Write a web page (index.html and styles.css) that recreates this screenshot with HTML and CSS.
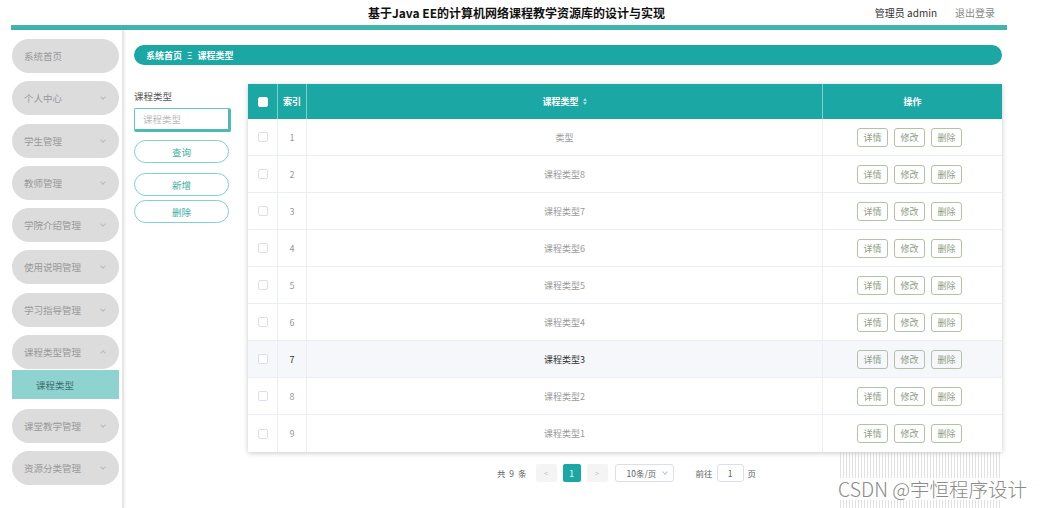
FILE: index.html
```html
<!DOCTYPE html>
<html lang="zh">
<head>
<meta charset="utf-8">
<title>课程类型</title>
<link rel="stylesheet" href="styles.css">
</head>
<body>
<header class="top">
  <div class="title">基于Java EE的计算机网络课程教学资源库的设计与实现</div>
  <div class="user">
    <span class="admin">管理员 admin</span>
    <span class="logout">退出登录</span>
  </div>
</header>
<div class="topline"></div>
<div class="main">
  <aside class="side">
    <div class="menu">系统首页</div>
    <div class="menu">个人中心<span class="chev"></span></div>
    <div class="menu">学生管理<span class="chev"></span></div>
    <div class="menu">教师管理<span class="chev"></span></div>
    <div class="menu">学院介绍管理<span class="chev"></span></div>
    <div class="menu">使用说明管理<span class="chev"></span></div>
    <div class="menu">学习指导管理<span class="chev"></span></div>
    <div class="menu open">课程类型管理<span class="chev up"></span></div>
    <div class="submenu">课程类型</div>
    <div class="menu after">课堂教学管理<span class="chev"></span></div>
    <div class="menu">资源分类管理<span class="chev"></span></div>
  </aside>
  <section class="content">
    <div class="crumb"><span>系统首页</span><span class="sep">Ξ</span><span>课程类型</span></div>
    <div class="body">
      <div class="search">
        <div class="label">课程类型</div>
        <div class="input">课程类型</div>
        <div class="btn first">查询</div>
        <div class="btn second">新增</div>
        <div class="btn">删除</div>
      </div>
      <div class="tablewrap">
        <div class="table">
          <div class="row head">
            <div class="c ck"><span class="box white"></span></div>
            <div class="c idx">索引</div>
            <div class="c name">课程类型<span class="sort"><i class="tu"></i><i class="td"></i></span></div>
            <div class="c op">操作</div>
          </div>
          <div class="row"><div class="c ck"><span class="box"></span></div><div class="c idx">1</div><div class="c name">类型</div><div class="c op"><span class="ob">详情</span><span class="ob">修改</span><span class="ob">删除</span></div></div>
          <div class="row"><div class="c ck"><span class="box"></span></div><div class="c idx">2</div><div class="c name">课程类型8</div><div class="c op"><span class="ob">详情</span><span class="ob">修改</span><span class="ob">删除</span></div></div>
          <div class="row"><div class="c ck"><span class="box"></span></div><div class="c idx">3</div><div class="c name">课程类型7</div><div class="c op"><span class="ob">详情</span><span class="ob">修改</span><span class="ob">删除</span></div></div>
          <div class="row"><div class="c ck"><span class="box"></span></div><div class="c idx">4</div><div class="c name">课程类型6</div><div class="c op"><span class="ob">详情</span><span class="ob">修改</span><span class="ob">删除</span></div></div>
          <div class="row"><div class="c ck"><span class="box"></span></div><div class="c idx">5</div><div class="c name">课程类型5</div><div class="c op"><span class="ob">详情</span><span class="ob">修改</span><span class="ob">删除</span></div></div>
          <div class="row"><div class="c ck"><span class="box"></span></div><div class="c idx">6</div><div class="c name">课程类型4</div><div class="c op"><span class="ob">详情</span><span class="ob">修改</span><span class="ob">删除</span></div></div>
          <div class="row hover"><div class="c ck"><span class="box"></span></div><div class="c idx">7</div><div class="c name">课程类型3</div><div class="c op"><span class="ob">详情</span><span class="ob">修改</span><span class="ob">删除</span></div></div>
          <div class="row"><div class="c ck"><span class="box"></span></div><div class="c idx">8</div><div class="c name">课程类型2</div><div class="c op"><span class="ob">详情</span><span class="ob">修改</span><span class="ob">删除</span></div></div>
          <div class="row"><div class="c ck"><span class="box"></span></div><div class="c idx">9</div><div class="c name">课程类型1</div><div class="c op"><span class="ob">详情</span><span class="ob">修改</span><span class="ob">删除</span></div></div>
        </div>
        <div class="pager">
          <span class="total">共 9 条</span>
          <span class="pbtn">&lt;</span>
          <span class="pnum">1</span>
          <span class="pbtn">&gt;</span>
          <span class="psel">10条/页<span class="chev small"></span></span>
          <span class="goto">前往</span>
          <span class="pinput">1</span>
          <span class="page">页</span>
        </div>
      </div>
    </div>
  </section>
</div>
<div class="wm"><div class="stripes"></div><div class="wmtext">CSDN @宇恒程序设计</div></div>
</body>
</html>
```
FILE: styles.css
```css
* { box-sizing: border-box; }
html, body { margin: 0; padding: 0; }
body {
  width: 1045px;
  height: 508px;
  overflow: hidden;
  background: #fff;
  font-family: "Noto Sans CJK SC", "Noto Sans", sans-serif;
  color: #606266;
  position: relative;
}
.top {
  height: 25px;
  position: relative;
  display: flex;
  justify-content: center;
  align-items: center;
}
.title {
  font-size: 12px;
  font-weight: bold;
  color: #111;
  margin-left: -12px;
}
.user {
  position: absolute;
  right: 50px;
  top: 0;
  height: 25px;
  display: flex;
  align-items: center;
  font-size: 10px;
}
.admin { color: #333; margin-right: 18px; }
.logout { color: #888; }
.topline {
  margin-left: 11px;
  width: 996px;
  height: 5px;
  background: #3fb5ad;
}
.main {
  display: flex;
  height: 478px;
}
.side {
  width: 124px;
  padding: 9px 0 0 12px;
  border-right: 2px solid #e6e6e6;
  box-shadow: 1px 0 3px rgba(0,0,0,0.06);
  display: flex;
  flex-direction: column;
}
.menu {
  width: 107px;
  height: 34px;
  margin-bottom: 8.3px;
  border-radius: 17px;
  background: #dcdcdc;
  color: #999;
  font-size: 9.5px;
  display: flex;
  align-items: center;
  padding-left: 12px;
  position: relative;
}
.menu.open { margin-bottom: 1px; }
.chev {
  position: absolute;
  right: 14px;
  top: 14px;
  width: 4px;
  height: 4px;
  border-right: 1px solid #bbb;
  border-bottom: 1px solid #bbb;
  transform: rotate(45deg);
}
.chev.up { top: 16px; transform: rotate(225deg); }
.submenu {
  width: 107px;
  height: 29px;
  background: #8ed3d0;
  color: #3c6f6e;
  font-size: 9.5px;
  display: flex;
  align-items: center;
  padding-left: 24px;
  margin-bottom: 10px;
}
.content {
  flex: 1;
  padding-left: 10px;
  padding-top: 15px;
}
.crumb {
  width: 868px;
  height: 20px;
  border-radius: 10px;
  background: #1ba8a5;
  color: #fff;
  font-size: 9px;
  font-weight: bold;
  display: flex;
  align-items: center;
  padding-left: 12px;
}
.crumb .sep { margin: 0 5px; font-weight: normal; }
.body {
  display: flex;
  margin-top: 19px;
}
.search {
  width: 97px;
  padding-top: 6px;
  display: flex;
  flex-direction: column;
}
.label {
  font-size: 9.5px;
  color: #555;
  height: 12px;
  line-height: 12px;
  margin-bottom: 6px;
}
.input {
  width: 97px;
  height: 24px;
  border: 1px solid #63c6bf;
  border-right: 3px solid #4fbab3;
  border-bottom: 3px solid #4fbab3;
  border-radius: 2px;
  font-size: 9.5px;
  color: #bbb;
  padding-left: 8px;
  display: flex;
  align-items: center;
}
.btn {
  width: 95px;
  height: 23px;
  border: 1px solid #80d2cb;
  border-radius: 12px;
  font-size: 9.5px;
  color: #3bb0a8;
  display: flex;
  align-items: center;
  justify-content: center;
  margin-bottom: 4px;
}
.btn.first { margin-top: 8px; margin-bottom: 10px; }
.tablewrap {
  margin-left: 17px;
  width: 754px;
}
.table {
  width: 754px;
  box-shadow: 0 1px 5px rgba(0,0,0,0.22);
  background: #fff;
}
.row {
  display: flex;
  height: 37px;
  border-bottom: 1px solid #ebeef5;
  font-size: 9px;
  color: #999;
}
.row:last-child { border-bottom: none; }
.row.head {
  height: 35px;
  background: #1ba8a5;
  color: #fff;
  font-weight: bold;
  border-bottom: none;
}
.row.hover { background: #f5f7fa; color: #333; }
.c {
  display: flex;
  align-items: center;
  justify-content: center;
  border-right: 1px solid #ebeef5;
}
.head .c { border-right: 1px solid rgba(255,255,255,0.45); }
.c:last-child, .head .c:last-child { border-right: none; }
.ck { width: 30px; }
.idx { width: 29px; }
.name { width: 516px; }
.op { flex: 1; gap: 6px; }
.row:not(.head) .op { padding-right: 6px; }
.box {
  width: 10px;
  height: 10px;
  border: 1px solid #dcdfe6;
  border-radius: 2px;
  background: #fff;
}
.box.white { border-color: #fff; }
.sort {
  display: inline-flex;
  flex-direction: column;
  margin-left: 4px;
  gap: 1px;
}
.sort i {
  width: 0;
  height: 0;
  border-left: 2.5px solid transparent;
  border-right: 2.5px solid transparent;
}
.sort .tu { border-bottom: 3px solid rgba(255,255,255,0.6); }
.sort .td { border-top: 3px solid rgba(255,255,255,0.6); }
.ob {
  width: 31px;
  height: 19px;
  border: 1px solid #b3c1a6;
  border-radius: 3px;
  color: #8f9c85;
  font-size: 9px;
  font-weight: normal;
  display: flex;
  align-items: center;
  justify-content: center;
}
.pager {
  display: flex;
  align-items: center;
  justify-content: center;
  margin-top: 12px;
  height: 18px;
  font-size: 8.5px;
  color: #606266;
  padding-left: 3px;
}
.total { margin-right: 9px; word-spacing: 2px; }
.pbtn {
  width: 21px;
  height: 18px;
  background: #f4f4f5;
  color: #c0c4cc;
  display: flex;
  align-items: center;
  justify-content: center;
  border-radius: 2px;
  font-size: 7px;
}
.pnum {
  width: 18px;
  height: 18px;
  background: #1ba8a5;
  color: #fff;
  display: flex;
  align-items: center;
  justify-content: center;
  border-radius: 2px;
  margin: 0 6px;
}
.psel {
  width: 59px;
  height: 18px;
  border: 1px solid #dcdfe6;
  border-radius: 3px;
  margin-left: 7px;
  display: flex;
  align-items: center;
  padding-left: 11px;
  position: relative;
}
.chev.small { right: 6px; top: 5px; width: 4px; height: 4px; border-color: #c0c4cc; }
.goto { margin-left: 22px; margin-right: 4px; }
.pinput {
  width: 27px;
  height: 18px;
  border: 1px solid #dcdfe6;
  border-radius: 3px;
  display: flex;
  align-items: center;
  justify-content: center;
}
.page { margin-left: 4px; }
.wm {
  position: absolute;
  left: 838px;
  top: 452px;
  width: 205px;
  height: 56px;
}
.stripes {
  position: absolute;
  left: 2px;
  top: 0;
  width: 160px;
  height: 56px;
  background: repeating-linear-gradient(90deg, rgba(200,200,200,0.55) 0 1px, transparent 1px 3px);
}
.wmtext {
  position: absolute;
  left: 0;
  top: 26px;
  font-family: "Noto Sans CJK SC", sans-serif;
  font-weight: 300;
  font-size: 19.5px;
  color: #8a8a8a;
  white-space: nowrap;
  background: rgba(255,255,255,0.85);
  line-height: 22px;
}
```
